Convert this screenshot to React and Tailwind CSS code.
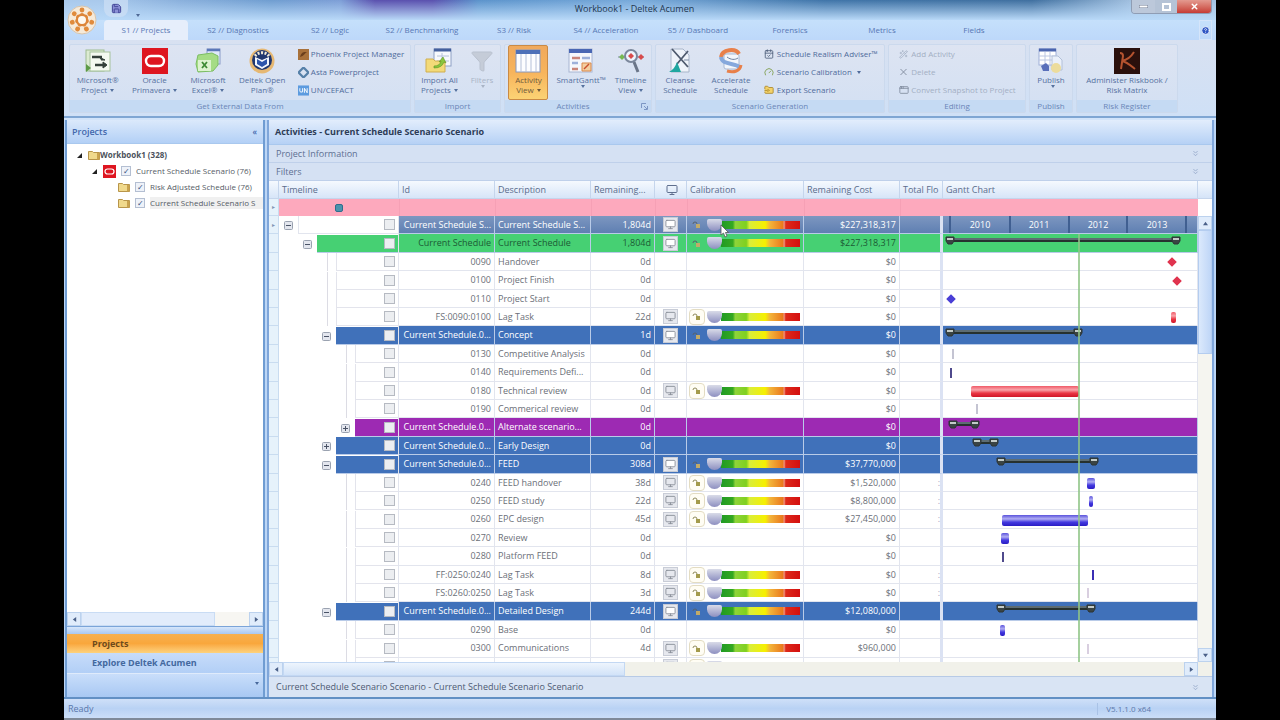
import { useState } from "react";
import {
  AppWindow,
  CalendarCheck,
  ChevronsDown,
  CircleHelp,
  Diamond,
  Filter,
  FolderInput,
  Gauge,
  Monitor,
  Save,
  WandSparkles,
  X,
} from "lucide-react";
import clsx from "clsx";

const TABS = [
  "S1 // Projects",
  "S2 // Diagnostics",
  "S2 // Logic",
  "S2 // Benchmarking",
  "S3 // Risk",
  "S4 // Acceleration",
  "S5 // Dashboard",
  "Forensics",
  "Metrics",
  "Fields",
];

// gantt positions are pixels from the left edge of the chart column
const ROWS = [
  { kind: "scenario", level: 0, id: "Current Schedule S...", desc: "Current Schedule S...", rem: "1,804d", cal: true, cost: "$227,318,317", gantt: { type: "years" } },
  { kind: "green", level: 1, id: "Current Schedule", desc: "Current Schedule", rem: "1,804d", cal: true, cost: "$227,318,317", gantt: { type: "summary", from: 7, to: 233 } },
  { level: 2, id: "0090", desc: "Handover", rem: "0d", cost: "$0", gantt: { type: "milestone", from: 229, color: "#e0344f" } },
  { level: 2, id: "0100", desc: "Project Finish", rem: "0d", cost: "$0", gantt: { type: "milestone", from: 234, color: "#e0344f" } },
  { level: 2, id: "0110", desc: "Project Start", rem: "0d", cost: "$0", gantt: { type: "milestone", from: 8, color: "#4a3fd6" } },
  { level: 2, id: "FS:0090:0100", desc: "Lag Task", rem: "22d", cal: true, cost: "$0", gantt: { type: "bar", from: 228, to: 233, fill: "url(#red-bar)" } },
  { kind: "blue", level: 2, id: "Current Schedule.0...", desc: "Concept", rem: "1d", cal: true, cost: "$0", gantt: { type: "summary", from: 7, to: 135 } },
  { level: 3, id: "0130", desc: "Competitive Analysis", rem: "0d", cost: "$0", gantt: { type: "tick", from: 10, color: "#c4c4d2" } },
  { level: 3, id: "0140", desc: "Requirements Defi...", rem: "0d", cost: "$0", gantt: { type: "tick", from: 8, color: "#4f4a8c" } },
  { level: 3, id: "0180", desc: "Technical review", rem: "0d", cal: true, cost: "$0", gantt: { type: "bar", from: 28, to: 136, fill: "url(#red-bar)" } },
  { level: 3, id: "0190", desc: "Commerical review", rem: "0d", cost: "$0", gantt: { type: "tick", from: 34, color: "#c4c4d2" } },
  { kind: "purple", level: 3, id: "Current Schedule.0...", desc: "Alternate scenario...", rem: "0d", cost: "$0", gantt: { type: "summary", from: 10, to: 32 } },
  { kind: "blue", level: 2, id: "Current Schedule.0...", desc: "Early Design", rem: "0d", cost: "$0", gantt: { type: "summary", from: 34, to: 51 } },
  { kind: "blue", level: 2, id: "Current Schedule.0...", desc: "FEED", rem: "308d", cal: true, cost: "$37,770,000", gantt: { type: "summary", from: 58, to: 151 } },
  { level: 3, id: "0240", desc: "FEED handover", rem: "38d", cal: true, cost: "$1,520,000", float: ":", gantt: { type: "bar", from: 144, to: 152, fill: "url(#blue-bar)" } },
  { level: 3, id: "0250", desc: "FEED study", rem: "22d", cal: true, cost: "$8,800,000", float: ":", gantt: { type: "bar", from: 146, to: 150, fill: "url(#blue-bar)" } },
  { level: 3, id: "0260", desc: "EPC design", rem: "45d", cal: true, cost: "$27,450,000", float: ":", gantt: { type: "bar", from: 59, to: 145, fill: "url(#blue-bar)" } },
  { level: 3, id: "0270", desc: "Review", rem: "0d", cost: "$0", gantt: { type: "bar", from: 58, to: 66, fill: "url(#blue-bar)" } },
  { level: 3, id: "0280", desc: "Platform FEED", rem: "0d", cost: "$0", gantt: { type: "tick", from: 60, color: "#4f4a8c" } },
  { level: 3, id: "FF:0250:0240", desc: "Lag Task", rem: "8d", cal: true, cost: "$0", float: ":", gantt: { type: "tick", from: 150, color: "#3b2fb4" } },
  { level: 3, id: "FS:0260:0250", desc: "Lag Task", rem: "3d", cal: true, cost: "$0", float: ":", gantt: { type: "tick", from: 145, color: "#d9cfe0" } },
  { kind: "blue", level: 2, id: "Current Schedule.0...", desc: "Detailed Design", rem: "244d", cal: true, cost: "$12,080,000", gantt: { type: "summary", from: 58, to: 148 } },
  { level: 3, id: "0290", desc: "Base", rem: "0d", cost: "$0", gantt: { type: "bar", from: 57, to: 62, fill: "url(#blue-bar)" } },
  { level: 3, id: "0300", desc: "Communications", rem: "4d", cal: true, cost: "$960,000", gantt: { type: "tick", from: 145, color: "#d9cfe0" } },
];

const ROW_COLORS = {
  scenario: "bg-linear-to-b from-[#7d97c0] to-[#5f7fb2] text-white font-medium",
  green: "bg-[#46d073] text-[#1c5a35]",
  blue: "bg-[#4071ba] text-white font-medium",
  purple: "bg-[#9d2ab3] text-white font-medium",
};

const FILL = {
  scenario: "border-[#e2e5ee] border-l bg-white",
  green: "border-[#b9cbe8] bg-[#46d073]",
  blue: "border-[#b9cbe8] bg-[#4071ba]",
  purple: "border-[#b9cbe8] bg-[#9d2ab3]",
};

const INDENT = ["w-[5px]", "w-[24px]", "w-[43px]", "w-[62px]"];
const LEAF_INDENT = ["w-[10px]", "w-[29px]", "w-[48px]", "w-[67px]"];

/* ---------- ribbon ---------- */

function BigButton({ icon, lines, arrow, active, muted, className }) {
  return (
    <button
      className={clsx(
        "flex flex-col items-center rounded-xs border pt-px text-[8px] leading-[10px]",
        active
          ? "border-[#c98a45] bg-linear-to-b from-[#f0a95c] via-[#f7b45c] to-[#fbd274] text-[#6f5a3c]"
          : "border-transparent",
        muted ? "text-[#a9b4c6]" : !active && "text-[#56719f]",
        className
      )}
    >
      <span className="flex h-[28px] items-center">{icon}</span>
      {lines.map((line, i) => (
        <span key={line} className="whitespace-nowrap">
          {line}
          {arrow && i === lines.length - 1 && lines.length > 1 && <Caret />}
        </span>
      ))}
      {arrow && lines.length === 1 && <Caret />}
    </button>
  );
}

function Caret() {
  return (
    <svg width="4" height="3" viewBox="0 0 4 3" fill="currentColor" className="ml-[3px] inline-block">
      <path d="M0 0h4L2 3z" />
    </svg>
  );
}

function SmallButton({ icon, label, muted, arrow }) {
  return (
    <button
      className={clsx(
        "flex h-[18px] items-center gap-[2px] whitespace-nowrap text-[8px]",
        muted ? "text-[#a3afc3]" : "text-[#4f6b9b]"
      )}
    >
      <span className="flex w-[11px] justify-center">{icon}</span>
      {label}
      {arrow && <Caret />}
    </button>
  );
}

function Group({ title, className, launcher, children }) {
  return (
    <section
      className={clsx(
        "flex shrink-0 flex-col rounded-xs border border-[#cbd9ed] bg-linear-to-b from-[#dde4f2] to-[#d3e0f3]",
        className
      )}
    >
      <div className="flex flex-1 justify-around">{children}</div>
      <h3 className="flex h-[12px] items-center bg-[#c5daf3] text-[8px] text-[#6a86b8]">
        <span className="flex-1 text-center">{title}</span>
        {launcher && (
          <svg width="7" height="7" viewBox="0 0 7 7" className="mr-[3px]" stroke="#7d97c4" fill="none">
            <path d="M.5 5V.5H5M3 3l3 3M6.500 3v3.500H3" />
          </svg>
        )}
      </h3>
    </section>
  );
}

function ProjectIcon() {
  return (
    <svg width="26" height="26" viewBox="0 0 26 26">
      <rect x="1" y="2" width="18" height="21" fill="#dcebd2" stroke="#9dbb90" />
      <rect x="5" y="4" width="20" height="19" fill="#f4f9f0" stroke="#a5c29b" />
      <path d="M7 9h10M10 17h11" stroke="#34403a" strokeWidth="2.500" />
      <path d="M14 9l6 3h-4M18 14l4 3-4 3z" fill="#34403a" stroke="#34403a" />
      <path d="M1 16l5 4-5 4z" fill="#5c9a46" />
    </svg>
  );
}

function OracleIcon({ size = 26 }) {
  return (
    <svg width={size} height={size} viewBox="0 0 26 26">
      <rect width="26" height="26" fill="#de1620" />
      <rect x="4" y="8" width="18" height="10" rx="5" fill="none" stroke="#fff" strokeWidth="2.400" />
    </svg>
  );
}

function ExcelIcon() {
  return (
    <svg width="26" height="26" viewBox="0 0 26 26">
      <rect x="12" y="1" width="13" height="15" fill="#dfe9fa" stroke="#8a9cc8" />
      <path d="M12 2h13" stroke="#5c78b8" strokeWidth="2.500" />
      <path d="M3 7l14-2 6 3v9l-5 6-15 1-2-8z" fill="#a5dc85" stroke="#7bbd62" />
      <rect x="3" y="12" width="13" height="11" fill="#dcf3cf" />
      <path d="M7 14l5 6M12 14l-5 6" stroke="#3d8a34" strokeWidth="1.800" />
    </svg>
  );
}

function OpenPlanIcon() {
  return (
    <svg width="26" height="26" viewBox="0 0 26 26">
      <circle cx="13" cy="13" r="12.500" fill="#e6b873" />
      <circle cx="13" cy="12" r="10" fill="#20376f" />
      <path d="M6 8a9 9 0 0 1 14 0" stroke="#f2ead5" strokeWidth="3" fill="none" strokeDasharray="2 1.500" />
      <path d="M6 9l7 3 7-3v8l-7 4-7-4z" fill="#f3f7ff" />
      <path d="M8 11l5 3 5-3v5l-5 3-5-3z" fill="#2c55ac" />
    </svg>
  );
}

function ImportIcon() {
  return (
    <svg width="28" height="26" viewBox="0 0 28 26">
      <rect x="9" y="1" width="17" height="17" fill="#f7f9fd" stroke="#8ea0c4" />
      <path d="M9 2h17" stroke="#45609d" strokeWidth="3" />
      <path d="M12 8h12M12 13h12M17 5v12" stroke="#b6c2da" />
      <path d="M1 11h7l2 2h10v11H1z" fill="#f3da78" stroke="#cfae50" />
      <path d="M9 18q6 0 7-5l-2 1 4-5 3 6-2-1q-2 6-10 6z" fill="#8ac63f" stroke="#5c9322" strokeWidth=".6" />
    </svg>
  );
}

function ActivityIcon() {
  return (
    <svg width="26" height="24" viewBox="0 0 26 24">
      <rect x="1" y="1" width="24" height="22" fill="#fdfdff" stroke="#8797bd" />
      <rect x="1" y="1" width="24" height="4" fill="#4d70b8" />
      <path d="M6 5v18M11 5v18M16 5v18M21 5v18" stroke="#b5c0d8" />
    </svg>
  );
}

function SmartGanttIcon() {
  return (
    <svg width="26" height="26" viewBox="0 0 26 26">
      <rect x="1" y="1" width="23" height="23" fill="#f5f7fc" stroke="#a8b5d2" />
      <rect x="1" y="1" width="23" height="4" fill="#4a67b4" />
      <path d="M4 10h8M4 21h6" stroke="#c9857a" strokeWidth="2.500" />
      <path d="M14 10h8M4 15h6" stroke="#9db0da" strokeWidth="2.500" />
      <path d="M14 15h9v8h-9z" fill="#f4cfa0" stroke="#d9884a" />
      <path d="M16 21l5-5" stroke="#c8502f" strokeWidth="1.500" />
    </svg>
  );
}

function TimelineIcon() {
  return (
    <svg width="28" height="26" viewBox="0 0 28 26">
      <path d="M1 9h26" stroke="#9aa6bc" strokeWidth="1.500" />
      <path d="M5 6l3 3-3 3-3-3z" fill="#76b852" />
      <path d="M24 6l3 3-3 3-3-3z" fill="#d84b4b" />
      <circle cx="14" cy="8" r="6" fill="#edf4fd" stroke="#7b879c" strokeWidth="2" />
      <path d="M14 5l3 3-3 3-3-3z" fill="#d84b4b" />
      <path d="M17 14l4 10" stroke="#6b7689" strokeWidth="3" />
    </svg>
  );
}

function CleanseIcon() {
  return (
    <svg width="24" height="26" viewBox="0 0 24 26">
      <path d="M3 1h12l6 6v17H3z" fill="#eef3fa" stroke="#a8b5c9" />
      <path d="M4 1l16 18M20 3L9 16" stroke="#4e5a6e" strokeWidth="1.800" />
      <path d="M9 14l4 10H1c4-2 6-5 8-10z" fill="#1fa7a0" />
      <path d="M16 12h5" stroke="#7d8ca4" />
    </svg>
  );
}

function AccelerateIcon() {
  return (
    <svg width="26" height="26" viewBox="0 0 26 26">
      <rect x="6" y="6" width="15" height="15" rx="2" fill="#f3f6fb" stroke="#a9b8d2" />
      <path d="M3 9C4 1 18 0 21 6" stroke="#e8804a" strokeWidth="4" fill="none" />
      <path d="M3 9c1 9 16 5 19 11" stroke="#86a8dc" strokeWidth="4" fill="none" />
      <path d="M9 23c7 2 13 0 14-6" stroke="#e8804a" strokeWidth="3" fill="none" />
      <path d="M9 9c4 3 8 3 11 1" stroke="#6d7f9e" fill="none" />
    </svg>
  );
}

function PublishIcon() {
  return (
    <svg width="26" height="26" viewBox="0 0 26 26">
      <rect x="1" y="1" width="17" height="16" fill="#fff" stroke="#9fb0d8" />
      <path d="M1 2h17" stroke="#4b65ae" strokeWidth="3" />
      <path d="M1 8h17M1 12h17M7 4v13M12 4v13" stroke="#bcc7e2" />
      <path d="M14 8h6l4 4v10H14z" fill="#eaf0fa" stroke="#b2c0d8" />
      <path d="M3 18l5-3 3 3v5H5z" fill="#5a70ba" />
      <circle cx="18" cy="20" r="5" fill="#ecdc9c" />
    </svg>
  );
}

function RiskIcon() {
  return (
    <svg width="26" height="26" viewBox="0 0 26 26">
      <rect width="26" height="26" fill="#2a100c" />
      <path d="M6 5q3 0 3 3L7 21M20 4C17 9 12 12 8 13c5 1 8 4 13 8" stroke="#b5532f" strokeWidth="2" fill="none" />
    </svg>
  );
}

function Ribbon() {
  return (
    <div className="flex h-[78px] items-start gap-[3px] overflow-hidden border-b-2 border-[#7fa6d3] bg-linear-to-b from-[#d8e1f1] to-[#cfe0f6] px-[5px] pt-[4px]">
      <Group title="Get External Data From" className="h-[69px] w-[342px]">
        <BigButton icon={<ProjectIcon />} lines={["Microsoft®", "Project"]} arrow />
        <BigButton icon={<OracleIcon />} lines={["Oracle", "Primavera"]} arrow />
        <BigButton icon={<ExcelIcon />} lines={["Microsoft", "Excel®"]} arrow />
        <BigButton icon={<OpenPlanIcon />} lines={["Deltek Open", "Plan®"]} />
        <div className="flex flex-col">
          <SmallButton
            icon={
              <svg width="11" height="11" viewBox="0 0 11 11">
                <rect width="11" height="11" fill="#a8713a" />
                <path d="M2 8c2-6 4-5 7-5-2 1-3 4-7 5z" fill="#6b3f1c" />
              </svg>
            }
            label="Phoenix Project Manager"
          />
          <SmallButton icon={<Diamond size={11} strokeWidth={5} color="#5580a8" />} label="Asta Powerproject" />
          <SmallButton
            icon={
              <svg width="12" height="11" viewBox="0 0 12 11">
                <rect width="12" height="11" fill="#5c9bdf" />
                <path d="M2 3v3q0 2 3 1V3M7 8V3l3 5V3" stroke="#fff" fill="none" />
              </svg>
            }
            label="UN/CEFACT"
          />
        </div>
      </Group>
      <Group title="Import" className="h-[69px] w-[87px]">
        <BigButton icon={<ImportIcon />} lines={["Import All", "Projects"]} arrow />
        <BigButton icon={<Filter size={24} color="#b9c1cf" fill="#c5ccd8" strokeWidth={1} />} lines={["Filters"]} arrow muted />
      </Group>
      <Group title="Activities" className="h-[69px] w-[148px]" launcher>
        <BigButton icon={<ActivityIcon />} lines={["Activity", "View"]} arrow active className="w-[40px]" />
        <BigButton icon={<SmartGanttIcon />} lines={["SmartGantt™"]} arrow />
        <BigButton icon={<TimelineIcon />} lines={["Timeline", "View"]} arrow />
      </Group>
      <Group title="Scenario Generation" className="h-[69px] w-[230px]">
        <BigButton icon={<CleanseIcon />} lines={["Cleanse", "Schedule"]} />
        <BigButton icon={<AccelerateIcon />} lines={["Accelerate", "Schedule"]} />
        <div className="flex flex-col">
          <SmallButton icon={<CalendarCheck size={10} color="#4c5d78" />} label="Schedule Realism Adviser™" />
          <SmallButton icon={<Gauge size={10} color="#7b9a44" />} label="Scenario Calibration" arrow />
          <SmallButton icon={<FolderInput size={10} color="#a88428" fill="#f3d26a" />} label="Export Scenario" />
        </div>
      </Group>
      <Group title="Editing" className="h-[69px] w-[138px]">
        <div className="flex flex-col">
          <SmallButton muted icon={<WandSparkles size={9} />} label="Add Activity" />
          <SmallButton muted icon={<X size={12} color="#808b9e" />} label="Delete" />
          <SmallButton muted icon={<AppWindow size={10} color="#808b9e" />} label="Convert Snapshot to Project" />
        </div>
      </Group>
      <Group title="Publish" className="h-[69px] w-[44px]">
        <BigButton icon={<PublishIcon />} lines={["Publish"]} arrow />
      </Group>
      <Group title="Risk Register" className="h-[69px] w-[102px]">
        <BigButton icon={<RiskIcon />} lines={["Administer Riskbook /", "Risk Matrix"]} />
      </Group>
    </div>
  );
}

/* ---------- title bar ---------- */

function Orb() {
  return (
    <svg width="30" height="30" viewBox="0 0 30 30">
      <circle cx="15" cy="15" r="14" fill="#f6ead9" stroke="#d8c4ab" />
      {[0, 51, 103, 154, 206, 257, 309].map((a) => (
        <g key={a} transform={`rotate(${a} 15 15)`}>
          <circle cx="15" cy="5" r="2.400" fill="#e08b3c" />
          <path d="M12 10q3-4 6 0l-1 2h-4z" fill="#dd8538" />
        </g>
      ))}
      <circle cx="15" cy="15" r="4" fill="#fdf8ef" />
    </svg>
  );
}

function TitleBar() {
  return (
    <header className="h-[20px] bg-[linear-gradient(90deg,#a9c9ec_3%,#8ab0dc_10%,#6f9dd0_18%,#7d9ed6_24%,#5a50ae_27%,#5a50ae_32%,#5b93cb_36%,#79aada_50%,#3f74a8_66%,#3f6f9f_84%,#a5c3e2_93%)]">
      <div className="flex h-full items-start bg-linear-to-b from-transparent to-[#b9d9f8] pl-[40px]">
        <button aria-label="Save" className="flex h-[17px] w-[24px] items-center justify-center rounded-b-lg bg-[#cfe0f5]/70">
          <Save size={11} color="#3b3f92" fill="#8b90d6" />
        </button>
        <span className="w-[16px] pt-[2px] text-center text-[#4f6a96]">
          <Caret />
        </span>
        <h1 className="flex-1 pt-[2px] pr-[6px] text-center text-[9px] leading-[13px] text-[#22364f]">
          Workbook1 - Deltek Acumen
        </h1>
        <div className="mr-[4px] flex h-[14px] overflow-hidden rounded-b-sm border border-t-0 border-[#8f9db4] text-white">
          <button aria-label="Minimize" className="flex w-[23px] items-center justify-center bg-[#bcc8da]">
            <svg width="9" height="3">
              <rect width="9" height="3" fill="#fff" stroke="#6c7990" />
            </svg>
          </button>
          <button aria-label="Maximize" className="flex w-[22px] items-center justify-center bg-[#b5c3d6]">
            <svg width="9" height="8">
              <rect x="1" y="1" width="7" height="6" fill="none" stroke="#fff" strokeWidth="2" />
            </svg>
          </button>
          <button aria-label="Close" className="flex w-[34px] items-center justify-center bg-linear-to-b from-[#e39a90] to-[#c53a34]">
            <X size={9} strokeWidth={4} />
          </button>
        </div>
      </div>
    </header>
  );
}

function TabStrip({ active, onChange }) {
  return (
    <nav className="flex h-[20px] items-stretch bg-linear-to-b from-[#c5e0fb] to-[#bdd8fa] pl-[36px] text-[8px] text-[#5878b4]">
      {TABS.map((tab) => (
        <button
          key={tab}
          onClick={() => onChange(tab)}
          className={clsx(
            "mx-1 w-[84px] whitespace-nowrap rounded-t-sm",
            tab === active && "bg-[#e6eefb]"
          )}
        >
          {tab}
        </button>
      ))}
      <button aria-label="Help" className="mr-1 ml-auto flex w-[13px] items-center justify-center border border-[#d5e5fa]">
        <CircleHelp size={9} color="#fff" fill="#2f57c4" />
      </button>
    </nav>
  );
}

/* ---------- projects panel ---------- */

function FolderIcon() {
  return (
    <svg width="12" height="10" viewBox="0 0 12 10">
      <path d="M.5 1.500h4l1 1h6v7H.5z" fill="#f0d98c" stroke="#b8954a" />
      <path d="M9 3h2.500v6.500H9z" fill="#c9a24e" />
    </svg>
  );
}

function TreeCheck({ id }) {
  return (
    <input
      id={id}
      type="checkbox"
      defaultChecked
      className="flex size-[10px] shrink-0 appearance-none items-center justify-center border border-[#b4bfd2] bg-[#eef2f9] text-[8px] leading-none text-[#35507f] checked:before:content-['✓']"
    />
  );
}

function Expander() {
  return (
    <svg width="5" height="5" viewBox="0 0 5 5" className="mr-[6px]" fill="#222">
      <path d="M5 0v5H0z" />
    </svg>
  );
}

function ScrollArrow({ dir }) {
  return (
    <button
      aria-label={`Scroll ${dir}`}
      className="flex size-[14px] shrink-0 items-center justify-center border border-[#bcd2ee] bg-[#e0ecfb]"
    >
      <svg width="5" height="5" viewBox="0 0 6 6" fill="#4a6088">
        {dir === "left" && <path d="M5 0v6L1 3z" />}
        {dir === "right" && <path d="M1 0v6l4-3z" />}
        {dir === "up" && <path d="M0 5h6L3 1z" />}
        {dir === "down" && <path d="M0 1h6L3 5z" />}
      </svg>
    </button>
  );
}

function ProjectsPanel() {
  return (
    <aside className="flex w-[200px] shrink-0 flex-col overflow-hidden border-x-2 border-[#6f9cd2] bg-white">
      <h2 className="flex h-[24px] items-center justify-between border-b border-[#a9c8ee] bg-linear-to-b from-[#dbe9fb] to-[#b3d0f6] pt-px pr-1.5 pl-[5px] text-[9px] font-semibold text-[#4267ac]">
        Projects
        <span className="text-[8px]">«</span>
      </h2>
      <ul className="flex-1 overflow-hidden whitespace-nowrap pt-[3px] text-[8px] text-[#555b66]">
        <li className="flex h-[16px] items-center pl-[10px]">
          <Expander />
          <FolderIcon />
          <span className="font-bold text-[#4c525c]">Workbook1 (328)</span>
        </li>
        <li className="flex h-[16px] items-center pl-[25px]">
          <Expander />
          <OracleIcon size={13} />
          <span className="w-[5px]" />
          <TreeCheck id="scenario" />
          <label htmlFor="scenario" className="pl-[5px]">Current Schedule Scenario (76)</label>
        </li>
        <li className="flex h-[16px] items-center gap-[5px] pl-[51px]">
          <FolderIcon />
          <TreeCheck id="risk" />
          <label htmlFor="risk">Risk Adjusted Schedule (76)</label>
        </li>
        <li className="flex h-[16px] items-center gap-[5px] pl-[51px]">
          <FolderIcon />
          <TreeCheck id="scenario-s" />
          <label htmlFor="scenario-s" className="flex-1 bg-[#f0f0f0]">Current Schedule Scenario S</label>
        </li>
      </ul>
      <div className="flex h-[14px] bg-[#f7f6f2]">
        <ScrollArrow dir="left" />
        <div className="mr-[34px] flex-1 border border-[#c9dcf4] bg-[#e2ecfb]" />
        <ScrollArrow dir="right" />
      </div>
      <div className="h-[8px] border-t border-[#7ba4d8] bg-linear-to-b from-[#d6e6fb] to-[#a9c8f0]" />
      <button className="h-[19px] bg-linear-to-b from-[#f6b04e] via-[#f9a73c] to-[#fdd27c] pl-[25px] text-left text-[9px] font-bold text-[#6d4a1c]">
        Projects
      </button>
      <button className="h-[20px] bg-linear-to-b from-[#c7dcfa] to-[#b2cff6] pl-[25px] text-left text-[9px] font-bold text-[#44699f]">
        Explore Deltek Acumen
      </button>
      <div className="flex h-[24px] justify-end border-t border-[#dfebfb] bg-linear-to-b from-[#c9defa] to-[#a8c8f3] pt-2 pr-1 text-[#48689b]">
        <Caret />
      </div>
    </aside>
  );
}

/* ---------- activities grid ---------- */

function Pin({ x }) {
  return (
    <>
      <path d={`M${x - 4} 2h8v4l-2 3h-4l-2-3z`} fill="#3a4444" stroke="#2c3434" />
      <path d={`M${x - 3} 3h6v2h-6z`} fill="#c3cbc8" />
    </>
  );
}

function GanttItem({ type, from, to, color, fill }) {
  switch (type) {
    case "years":
      return (
        <>
          {[7, 67, 126, 184, 243].map((x) => (
            <path key={x} d={`M${x} 0v17`} stroke="#405f91" strokeWidth="2" />
          ))}
          {["2010", "2011", "2012", "2013"].map((year, i) => (
            <text key={year} x={37 + i * 59} y="12" fill="#fff" fontSize="9" textAnchor="middle">
              {year}
            </text>
          ))}
        </>
      );
    case "summary":
      return (
        <>
          <rect x={from} y="3" width={to - from} height="3" fill="#5d6c72" />
          <rect x={from} y="5" width={to - from} height="2" fill="#26312f" />
          <Pin x={from} />
          <Pin x={to} />
        </>
      );
    case "milestone":
      return <path d={`M${from} 4l5 5-5 5-5-5z`} fill={color} stroke="#fff" strokeOpacity=".4" />;
    case "bar":
      return <rect x={from} y="4" width={to - from} height="11" rx="2" fill={fill} />;
    case "tick":
      return <path d={`M${from} 4v10`} stroke={color} strokeWidth="2" />;
    default:
      return null;
  }
}

function RowCheck({ id }) {
  return (
    <input
      type="checkbox"
      aria-label={`Select ${id}`}
      className="size-[11px] appearance-none border border-[#b6bac2] bg-[#eceef1]"
    />
  );
}

function TimelineCell({ row }) {
  if (!row.kind) {
    return (
      <div className="flex h-[18px] items-stretch">
        <span className={LEAF_INDENT[row.level]} />
        <span className="w-[9px] border-l border-[#dcdce4]" />
        <div className="flex flex-1 items-center justify-end border-b border-l border-[#e3e4ec] pr-[3px]">
          <RowCheck id={row.id} />
        </div>
      </div>
    );
  }
  return (
    <div className="flex h-[18px] items-stretch">
      <span className={INDENT[row.level]} />
      <button aria-label="Toggle group" className="flex w-[14px] items-center">
        <svg width="9" height="9" viewBox="0 0 9 9">
          <rect x=".5" y=".5" width="8" height="8" rx="1" fill="#e3e6ee" stroke="#9aa2b0" />
          <path
            d={row.kind === "purple" || row.desc === "Early Design" ? "M2 4.500h5M4.500 2v5" : "M2 4.500h5"}
            stroke="#4a5366"
          />
        </svg>
      </button>
      <div className={clsx("flex flex-1 items-center justify-end border-b pr-[3px]", FILL[row.kind])}>
        <RowCheck id={row.id} />
      </div>
    </div>
  );
}

function Calibration({ row }) {
  const grouped = Boolean(row.kind);
  return (
    <div className="flex h-[17px] items-center pl-[2px]">
      <button
        aria-label="Lock calibration"
        className={clsx(
          "mr-[2px] flex size-[16px] items-center justify-center",
          !grouped && "rounded-sm border border-[#e3dcc2] bg-[#fffdf4]"
        )}
      >
        <svg width="10" height="9" viewBox="0 0 10 9">
          <path d="M1 4a2 2 0 0 1 4 0" stroke={grouped ? "#57636d" : "#8f8a5c"} fill="none" />
          <rect x="4" y="4" width="4" height="4" fill={grouped ? "#c2ab69" : "#a39a4b"} />
        </svg>
      </button>
      <input
        type="range"
        aria-label={`Calibration ${row.id}`}
        defaultValue="0"
        className="h-[12px] w-[93px] appearance-none bg-[linear-gradient(90deg,#1f9a24_0,#35a821_15%,#8fd43a_18%,#7fd020_32%,#d9ee3a_36%,#f6f000_56%,#f3b43a_62%,#ea7a1e_78%,#f0907a_80%,#dd2a1a_82%,#d40f0f_100%)] bg-[length:79px_8px] bg-right bg-no-repeat [&::-webkit-slider-thumb]:h-[12px] [&::-webkit-slider-thumb]:w-[15px] [&::-webkit-slider-thumb]:appearance-none [&::-webkit-slider-thumb]:rounded-b-lg [&::-webkit-slider-thumb]:rounded-t-xs [&::-webkit-slider-thumb]:bg-linear-to-b [&::-webkit-slider-thumb]:from-[#d9dbe8] [&::-webkit-slider-thumb]:to-[#8d8fc0]"
      />
    </div>
  );
}

function ActivityRow({ row }) {
  const color = row.kind && ROW_COLORS[row.kind];
  const cell = clsx(
    "border-r border-b p-0",
    row.kind ? "border-[#b9cbe8]" : "border-[#e2e5ee] text-[#6b6f78]",
    color
  );
  return (
    <tr className="h-[18px] nth-[5n+2]:h-[19px] nth-[5n+4]:h-[19px]">
      <td className="border-r border-b border-[#c9dcf0] bg-[#e6f2fb] p-0 text-center text-[6px] text-[#8296b5]">
        {row.level === 0 ? "▸" : ""}
      </td>
      <td className="border-r border-[#e2e5ee] p-0 align-bottom">
        <TimelineCell row={row} />
      </td>
      <td className={clsx(cell, "pr-[3px] text-right")}>{row.id}</td>
      <td className={clsx(cell, "pl-[3px]")}>{row.desc}</td>
      <td className={clsx(cell, "pr-[3px] text-right")}>{row.rem}</td>
      <td className={cell}>
        {row.cal && (
          <span className="mx-auto flex size-[15px] items-center justify-center border border-[#c8ccd6] bg-[#e6e8ee]">
            <Monitor size={11} color="#8b909a" fill={row.kind ? "#fff" : "none"} />
          </span>
        )}
      </td>
      <td className={cell}>{row.cal && <Calibration row={row} />}</td>
      <td className={clsx(cell, "pr-[3px] text-right")}>{row.cost}</td>
      <td className={clsx(cell, "border-r-3 border-r-[#dbe2f3] text-right text-[#a99fc0]")}>{row.float}</td>
      <td className={cell}>
        <svg height="17" className="block w-full">
          <GanttItem {...row.gantt} />
        </svg>
      </td>
    </tr>
  );
}

function ActivityTable() {
  const th = "border-r border-b border-[#c5d5ec] p-0 pl-[3px] text-left font-normal";
  return (
    <table className="w-full table-fixed border-separate border-spacing-0 whitespace-nowrap text-[9px] leading-[12px]">
      <colgroup>
        <col className="w-[10px]" />
        <col className="w-[120px]" />
        <col className="w-[96px]" />
        <col className="w-[96px]" />
        <col className="w-[64px]" />
        <col className="w-[32px]" />
        <col className="w-[117px]" />
        <col className="w-[96px]" />
        <col className="w-[43px]" />
        <col />
      </colgroup>
      <thead>
        <tr className="h-[18px] bg-linear-to-b from-[#f5f9fe] to-[#d5e4f8] text-[#5b6c8c]">
          <th className={th} />
          <th className={th}>Timeline</th>
          <th className={th}>Id</th>
          <th className={th}>Description</th>
          <th className={th}>Remaining...</th>
          <th className={clsx(th, "pl-0")}>
            <Monitor size={12} className="mx-auto" color="#5f6f8e" aria-label="Monitor" />
          </th>
          <th className={th}>Calibration</th>
          <th className={th}>Remaining Cost</th>
          <th className={th}>Total Flo</th>
          <th className={th}>Gantt Chart</th>
        </tr>
      </thead>
      <tbody>
        <tr className="h-[17px]">
          <td className="border-r border-b border-[#c9dcf0] bg-[#e6f2fb] p-0 text-center text-[6px] text-[#8296b5]">▸</td>
          <td className="bg-[#fda9bd] p-0">
            <span className="mx-auto block size-[8px] rounded-xs border border-[#2f6d8c] bg-[#4b93ad]" />
          </td>
          {[1, 2, 3, 4, 5, 6, 7].map((n) => (
            <td key={n} className="border-l border-[#f6a0b5] bg-[#fda9bd] p-0" />
          ))}
          <td className="bg-[#fda9bd] p-0" />
        </tr>
      </tbody>
      <tbody>
        {ROWS.map((row, i) => (
          <ActivityRow key={i} row={row} />
        ))}
        <ActivityRow row={{ level: 3, cal: true, gantt: { type: "bar", from: 68, to: 142, fill: "#c9a09a" } }} />
      </tbody>
    </table>
  );
}

function SectionBar({ title }) {
  return (
    <button className="flex h-[18px] w-full shrink-0 items-center justify-between border-b border-[#bfd0ea] bg-[#d5e1f3] pr-3 pl-[7px] text-[9px] text-[#5d6f92]">
      {title}
      <ChevronsDown size={9} color="#8ea2c4" />
    </button>
  );
}

function ActivitiesPanel() {
  return (
    <main className="flex min-w-0 flex-1 flex-col border-x-2 border-[#7fa6da] bg-[#d5e1f3]">
      <h2 className="flex h-[25px] shrink-0 items-center border-b border-[#a9c8ee] bg-linear-to-b from-[#e2edfc] to-[#b6d1f5] pl-[6px] text-[9px] font-bold text-[#2d3c57]">
        Activities - Current Schedule Scenario Scenario
      </h2>
      <SectionBar title="Project Information" />
      <SectionBar title="Filters" />
      <div className="flex min-h-0 flex-1 bg-white">
        <div className="relative min-w-0 flex-1 overflow-hidden">
          <ActivityTable />
          {/* data date */}
          <span className="absolute top-[53px] bottom-0 left-[809px] w-[2px] bg-[#8fc486]/80" />
          <svg className="absolute top-[43px] left-[451px]" width="9" height="14" viewBox="0 0 9 14">
            <path d="M1 1v10l2.500-2 1.500 4 2-1-1.500-3.500H8.500z" fill="#fff" stroke="#555" strokeWidth=".8" />
          </svg>
        </div>
        <div className="flex w-[14px] shrink-0 flex-col bg-[#f5f5f0]">
          <div className="h-[18px] border-b border-[#c5d5ec] bg-linear-to-b from-[#f5f9fe] to-[#d5e4f8]" />
          <div className="h-[17px] bg-white" />
          <ScrollArrow dir="up" />
          <div className="h-[124px] border border-[#b4cdf0] bg-linear-to-r from-[#dbe9fc] to-[#bfd6f7]" />
          <div className="flex-1" />
          <ScrollArrow dir="down" />
        </div>
      </div>
      <div className="flex h-[14px] shrink-0 bg-[#f1f1ea] pr-[14px]">
        <ScrollArrow dir="left" />
        <div className="w-[342px] border border-[#c3d8f3] bg-linear-to-b from-[#eef5fd] to-[#d2e3f8]" />
        <div className="flex-1" />
        <ScrollArrow dir="right" />
      </div>
      <footer className="flex h-[21px] shrink-0 items-center justify-between border-t border-[#b7cae6] bg-[#d9e4f4] pr-3 pl-[7px] text-[9px] text-[#4d5a73]">
        Current Schedule Scenario Scenario - Current Schedule Scenario Scenario
        <ChevronsDown size={9} color="#8ea2c4" />
      </footer>
    </main>
  );
}

export default function App() {
  const [tab, setTab] = useState(TABS[0]);

  return (
    <div className="h-screen bg-black px-16 font-['Open_Sans','Noto_Sans',sans-serif]">
      <svg className="absolute size-0">
        <defs>
          <linearGradient id="red-bar" x2="0" y2="1">
            <stop offset="0" stopColor="#f05a68" />
            <stop offset=".35" stopColor="#f9a5ab" />
            <stop offset=".65" stopColor="#ea3644" />
            <stop offset="1" stopColor="#cf1628" />
          </linearGradient>
          <linearGradient id="blue-bar" x2="0" y2="1">
            <stop offset="0" stopColor="#5a52dc" />
            <stop offset=".35" stopColor="#b1aef3" />
            <stop offset=".65" stopColor="#4339e0" />
            <stop offset="1" stopColor="#2a1cc4" />
          </linearGradient>
        </defs>
      </svg>
      <div className="relative flex h-full flex-col overflow-hidden border-b-2 border-[#7f8a99] bg-[#bcd6f6]">
        <TitleBar />
        <TabStrip active={tab} onChange={setTab} />
        <button aria-label="Application menu" className="absolute top-[5px] left-[3px]">
          <Orb />
        </button>
        <Ribbon />
        <div className="flex min-h-0 flex-1 gap-[2px] border-t-2 border-b-2 border-t-[#d2e4fa] border-b-[#6290c4] pr-[2px] pl-px">
          <ProjectsPanel />
          <ActivitiesPanel />
        </div>
        <footer className="flex h-[19px] shrink-0 items-center justify-between bg-linear-to-b from-[#cfe0f8] via-[#b9d2f4] to-[#cbdef8] pt-px pr-[65px] pl-1 text-[9px] text-[#5b78ab]">
          <span>Ready</span>
          <span className="border-l border-[#a9c2e6] pl-2 text-[8px]">V5.1.1.0 x64</span>
        </footer>
      </div>
    </div>
  );
}
